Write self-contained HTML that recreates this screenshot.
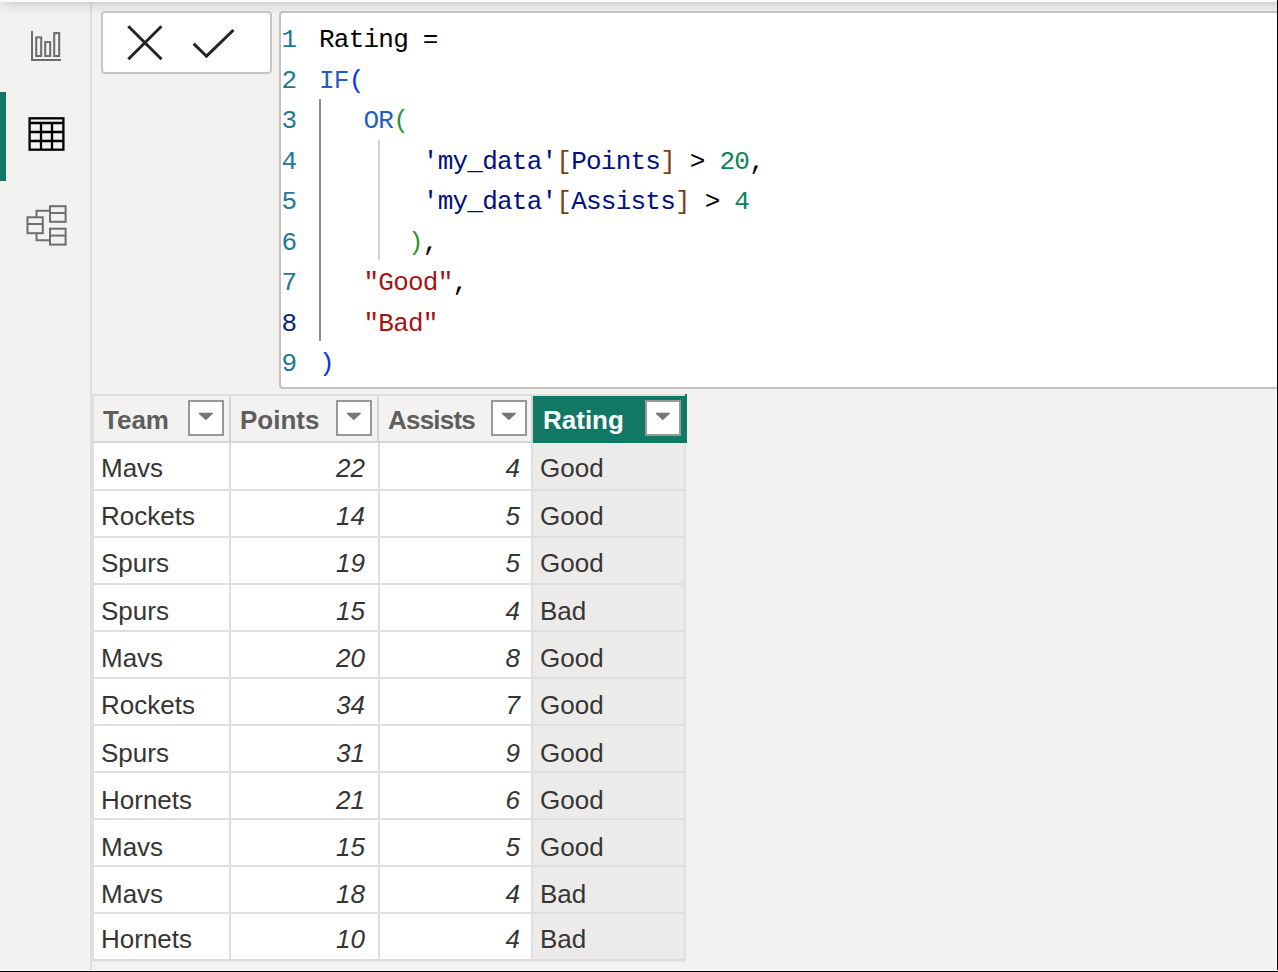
<!DOCTYPE html>
<html><head><meta charset="utf-8">
<style>
html,body{margin:0;padding:0}
body{width:1278px;height:972px;overflow:hidden;position:relative;background:#f3f2f1;font-family:"Liberation Sans",sans-serif}
.a{position:absolute}
#topstrip{left:0;top:0;width:1278px;height:2px;background:#fafafa}
#shadow{left:0;top:2px;width:1278px;height:13px;background:linear-gradient(rgba(0,0,0,0.13),rgba(0,0,0,0.06) 35%,rgba(0,0,0,0));-webkit-mask-image:linear-gradient(to right,rgba(0,0,0,0.3),#000 12px)}
#sidebarline{left:90px;top:2px;width:2px;height:970px;background:#e1dfdd}
#greenbar{left:0;top:92px;width:6px;height:89px;background:#117865}
#btnbox{left:101px;top:11px;width:167px;height:59px;border:2px solid #c6c5c3;border-radius:4px;background:#fff}
#fbox{left:279px;top:11px;width:998px;height:374px;border:2px solid #c3c2c0;border-right:none;border-radius:4px 0 0 4px;background:#fff}
.ln{position:absolute;left:281.5px;font-family:"Liberation Mono",monospace;font-size:26px;color:#237893;line-height:40.5px;height:40.5px;white-space:pre}
.cl{position:absolute;left:319px;font-family:"Liberation Mono",monospace;font-size:26px;letter-spacing:-0.77px;color:#000;line-height:40.5px;height:40.5px;white-space:pre}
.fn{color:#1f5fc4}
.b1{color:#0431fa}
.b2{color:#319331}
.tb{color:#001080}
.br{color:#7b3f14}
.nm{color:#098658}
.st{color:#a31515}
#guide1{left:319px;top:99px;width:2px;height:242px;background:#8a8a8a}
#guide2{left:378px;top:140px;width:2px;height:120px;background:#d4d4d4}
#rline{left:1276px;top:389px;width:1px;height:582px;background:#fff}
#rblack{left:1277px;top:0;width:1px;height:972px;background:#000}
#bline{left:0;top:970px;width:1278px;height:1px;background:#fff}
.ht{font-weight:bold;font-size:26px;line-height:29px;white-space:nowrap}
.bt{font-size:26px;line-height:29px;color:#363534;white-space:nowrap}
.dd{width:32px;height:32px;border:2px solid #999896;background:#fff}
#bblack{left:0;top:971px;width:1278px;height:1px;background:#000}
</style></head><body>
<div class="a" id="topstrip"></div>
<div class="a" id="sidebarline"></div>
<div class="a" id="shadow"></div>
<div class="a" id="greenbar"></div>

<!-- sidebar icons -->
<svg class="a" style="left:0;top:0" width="90" height="260" viewBox="0 0 90 260">
  <g fill="none" stroke="#6d6c6a" stroke-width="2">
    <path d="M32 31V60H61"/>
    <rect x="36.2" y="37.4" width="5" height="18.6"/>
    <rect x="45.2" y="42.1" width="5" height="13.9"/>
    <rect x="54.2" y="33.1" width="5" height="22.9"/>
  </g>
  <g fill="none" stroke="#000" stroke-width="2.3">
    <rect x="29.6" y="118.3" width="33.8" height="31.4"/>
    <path d="M29.6 123H63.4M29.6 132H63.4M29.6 141H63.4M41 123V149.7M52 123V149.7"/>
  </g>
  <g fill="none" stroke="#6f6e6c" stroke-width="2">
    <rect x="27.5" y="217.3" width="15.3" height="15.9"/>
    <path d="M27.5 224H42.8"/>
    <rect x="50" y="206.2" width="15.6" height="15.6"/>
    <path d="M50 213H65.6"/>
    <rect x="50" y="228.7" width="15.6" height="15.9"/>
    <path d="M50 235.6H65.6"/>
    <path d="M36.5 217.3V210.8H50M36.5 233.2V240.3H50"/>
  </g>
</svg>

<div class="a" id="btnbox"></div>
<svg class="a" style="left:101px;top:11px" width="171" height="63" viewBox="101 11 171 63">
  <g fill="none" stroke="#252423" stroke-width="3">
    <path d="M128.3 26.3L161.5 59.3M161.5 26.3L128.3 59.3"/>
    <path d="M193.6 43.6L206.5 56.2L233.5 30"/>
  </g>
</svg>

<div class="a" id="fbox"></div>
<div class="a" id="guide1"></div>
<div class="a" id="guide2"></div>

<div class="ln" style="top:19.90px">1</div>
<div class="ln" style="top:60.90px">2</div>
<div class="ln" style="top:100.90px">3</div>
<div class="ln" style="top:141.90px">4</div>
<div class="ln" style="top:181.90px">5</div>
<div class="ln" style="top:222.90px">6</div>
<div class="ln" style="top:262.90px">7</div>
<div class="ln" style="top:303.90px;color:#0b216f">8</div>
<div class="ln" style="top:343.90px">9</div>

<div class="cl" style="top:19.90px">Rating =</div>
<div class="cl" style="top:60.90px"><span class="fn">IF</span><span class="b1">(</span></div>
<div class="cl" style="top:100.90px">   <span class="fn">OR</span><span class="b2">(</span></div>
<div class="cl" style="top:141.90px">       <span class="tb">'my_data'</span><span class="br">[</span><span class="tb">Points</span><span class="br">]</span> &gt; <span class="nm">20</span>,</div>
<div class="cl" style="top:181.90px">       <span class="tb">'my_data'</span><span class="br">[</span><span class="tb">Assists</span><span class="br">]</span> &gt; <span class="nm">4</span></div>
<div class="cl" style="top:222.90px">      <span class="b2">)</span>,</div>
<div class="cl" style="top:262.90px">   <span class="st">"Good"</span>,</div>
<div class="cl" style="top:303.90px">   <span class="st">"Bad"</span></div>
<div class="cl" style="top:343.90px"><span class="b1">)</span></div>

<!-- TABLE -->
<div class="a" style="left:94px;top:443px;width:590px;height:516px;background:#fff;"></div>
<div class="a" style="left:533px;top:443px;width:151px;height:516px;background:#edebe9;"></div>
<div class="a" style="left:94px;top:396px;width:439px;height:45px;background:#f3f2f1;"></div>
<div class="a" style="left:92px;top:394px;width:593px;height:2px;background:#e1dfdd;"></div>
<div class="a" style="left:92px;top:394px;width:2px;height:567px;background:#e1dfdd;"></div>
<div class="a" style="left:94px;top:441px;width:439px;height:2px;background:#d6d4d2;"></div>
<div class="a" style="left:533px;top:396px;width:154px;height:47px;background:#117865;"></div>
<div class="a" style="left:685px;top:394px;width:2px;height:2px;background:#117865;"></div>
<div class="a" style="left:229px;top:396px;width:2px;height:45px;background:#d6d4d2;"></div>
<div class="a" style="left:377px;top:396px;width:2px;height:45px;background:#d6d4d2;"></div>
<div class="a" style="left:531px;top:396px;width:2px;height:45px;background:#d6d4d2;"></div>
<div class="a" style="left:229px;top:443px;width:2px;height:516px;background:#e1dfdd;"></div>
<div class="a" style="left:378px;top:443px;width:2px;height:516px;background:#e1dfdd;"></div>
<div class="a" style="left:531px;top:443px;width:2px;height:516px;background:#e1dfdd;"></div>
<div class="a" style="left:684px;top:443px;width:2px;height:518px;background:#e1dfdd;"></div>
<div class="a" style="left:94px;top:489px;width:590px;height:2px;background:#e1dfdd;"></div>
<div class="a" style="left:94px;top:536px;width:590px;height:2px;background:#e1dfdd;"></div>
<div class="a" style="left:94px;top:583px;width:590px;height:2px;background:#e1dfdd;"></div>
<div class="a" style="left:94px;top:630px;width:590px;height:2px;background:#e1dfdd;"></div>
<div class="a" style="left:94px;top:677px;width:590px;height:2px;background:#e1dfdd;"></div>
<div class="a" style="left:94px;top:724px;width:590px;height:2px;background:#e1dfdd;"></div>
<div class="a" style="left:94px;top:771px;width:590px;height:2px;background:#e1dfdd;"></div>
<div class="a" style="left:94px;top:818px;width:590px;height:2px;background:#e1dfdd;"></div>
<div class="a" style="left:94px;top:865px;width:590px;height:2px;background:#e1dfdd;"></div>
<div class="a" style="left:94px;top:912px;width:590px;height:2px;background:#e1dfdd;"></div>
<div class="a" style="left:92px;top:959px;width:594px;height:2px;background:#dedcda;"></div>
<div class="a" style="left:92px;top:961px;width:594px;height:1px;background:#e9e8e6;"></div>
<div class="a ht" style="left:103px;top:405.76px;color:#605e5c">Team</div>
<div class="a ht" style="left:240px;top:405.76px;color:#605e5c">Points</div>
<div class="a ht" style="left:388px;top:405.76px;color:#605e5c"><span style="letter-spacing:-0.8px">Assists</span></div>
<div class="a ht" style="left:543px;top:405.76px;color:#ffffff">Rating</div>
<div class="a dd" style="left:188px;top:400px"></div>
<svg class="a" style="left:188px;top:400px" width="36" height="36" viewBox="0 0 36 36"><path d="M10.8 12.8H24.8V13.8L17.8 20.2L10.8 13.8Z" fill="#777675"/></svg>
<div class="a dd" style="left:336px;top:400px"></div>
<svg class="a" style="left:336px;top:400px" width="36" height="36" viewBox="0 0 36 36"><path d="M10.8 12.8H24.8V13.8L17.8 20.2L10.8 13.8Z" fill="#777675"/></svg>
<div class="a dd" style="left:491px;top:400px"></div>
<svg class="a" style="left:491px;top:400px" width="36" height="36" viewBox="0 0 36 36"><path d="M10.8 12.8H24.8V13.8L17.8 20.2L10.8 13.8Z" fill="#777675"/></svg>
<div class="a dd" style="left:645px;top:400px"></div>
<svg class="a" style="left:645px;top:400px" width="36" height="36" viewBox="0 0 36 36"><path d="M10.8 12.8H24.8V13.8L17.8 20.2L10.8 13.8Z" fill="#777675"/></svg>
<div class="a bt" style="left:101px;top:453.76px;">Mavs</div>
<div class="a bt" style="left:165px;width:200px;text-align:right;top:453.76px;font-style:italic;">22</div>
<div class="a bt" style="left:320px;width:200px;text-align:right;top:453.76px;font-style:italic;">4</div>
<div class="a bt" style="left:540px;top:453.76px;">Good</div>
<div class="a bt" style="left:101px;top:501.76px;">Rockets</div>
<div class="a bt" style="left:165px;width:200px;text-align:right;top:501.76px;font-style:italic;">14</div>
<div class="a bt" style="left:320px;width:200px;text-align:right;top:501.76px;font-style:italic;">5</div>
<div class="a bt" style="left:540px;top:501.76px;">Good</div>
<div class="a bt" style="left:101px;top:548.76px;">Spurs</div>
<div class="a bt" style="left:165px;width:200px;text-align:right;top:548.76px;font-style:italic;">19</div>
<div class="a bt" style="left:320px;width:200px;text-align:right;top:548.76px;font-style:italic;">5</div>
<div class="a bt" style="left:540px;top:548.76px;">Good</div>
<div class="a bt" style="left:101px;top:596.76px;">Spurs</div>
<div class="a bt" style="left:165px;width:200px;text-align:right;top:596.76px;font-style:italic;">15</div>
<div class="a bt" style="left:320px;width:200px;text-align:right;top:596.76px;font-style:italic;">4</div>
<div class="a bt" style="left:540px;top:596.76px;">Bad</div>
<div class="a bt" style="left:101px;top:643.76px;">Mavs</div>
<div class="a bt" style="left:165px;width:200px;text-align:right;top:643.76px;font-style:italic;">20</div>
<div class="a bt" style="left:320px;width:200px;text-align:right;top:643.76px;font-style:italic;">8</div>
<div class="a bt" style="left:540px;top:643.76px;">Good</div>
<div class="a bt" style="left:101px;top:690.76px;">Rockets</div>
<div class="a bt" style="left:165px;width:200px;text-align:right;top:690.76px;font-style:italic;">34</div>
<div class="a bt" style="left:320px;width:200px;text-align:right;top:690.76px;font-style:italic;">7</div>
<div class="a bt" style="left:540px;top:690.76px;">Good</div>
<div class="a bt" style="left:101px;top:738.76px;">Spurs</div>
<div class="a bt" style="left:165px;width:200px;text-align:right;top:738.76px;font-style:italic;">31</div>
<div class="a bt" style="left:320px;width:200px;text-align:right;top:738.76px;font-style:italic;">9</div>
<div class="a bt" style="left:540px;top:738.76px;">Good</div>
<div class="a bt" style="left:101px;top:785.76px;">Hornets</div>
<div class="a bt" style="left:165px;width:200px;text-align:right;top:785.76px;font-style:italic;">21</div>
<div class="a bt" style="left:320px;width:200px;text-align:right;top:785.76px;font-style:italic;">6</div>
<div class="a bt" style="left:540px;top:785.76px;">Good</div>
<div class="a bt" style="left:101px;top:832.76px;">Mavs</div>
<div class="a bt" style="left:165px;width:200px;text-align:right;top:832.76px;font-style:italic;">15</div>
<div class="a bt" style="left:320px;width:200px;text-align:right;top:832.76px;font-style:italic;">5</div>
<div class="a bt" style="left:540px;top:832.76px;">Good</div>
<div class="a bt" style="left:101px;top:879.76px;">Mavs</div>
<div class="a bt" style="left:165px;width:200px;text-align:right;top:879.76px;font-style:italic;">18</div>
<div class="a bt" style="left:320px;width:200px;text-align:right;top:879.76px;font-style:italic;">4</div>
<div class="a bt" style="left:540px;top:879.76px;">Bad</div>
<div class="a bt" style="left:101px;top:924.76px;">Hornets</div>
<div class="a bt" style="left:165px;width:200px;text-align:right;top:924.76px;font-style:italic;">10</div>
<div class="a bt" style="left:320px;width:200px;text-align:right;top:924.76px;font-style:italic;">4</div>
<div class="a bt" style="left:540px;top:924.76px;">Bad</div>

<div class="a" id="rline"></div>
<div class="a" id="rblack"></div>
<div class="a" id="bline"></div>
<div class="a" id="bblack"></div>
</body></html>
